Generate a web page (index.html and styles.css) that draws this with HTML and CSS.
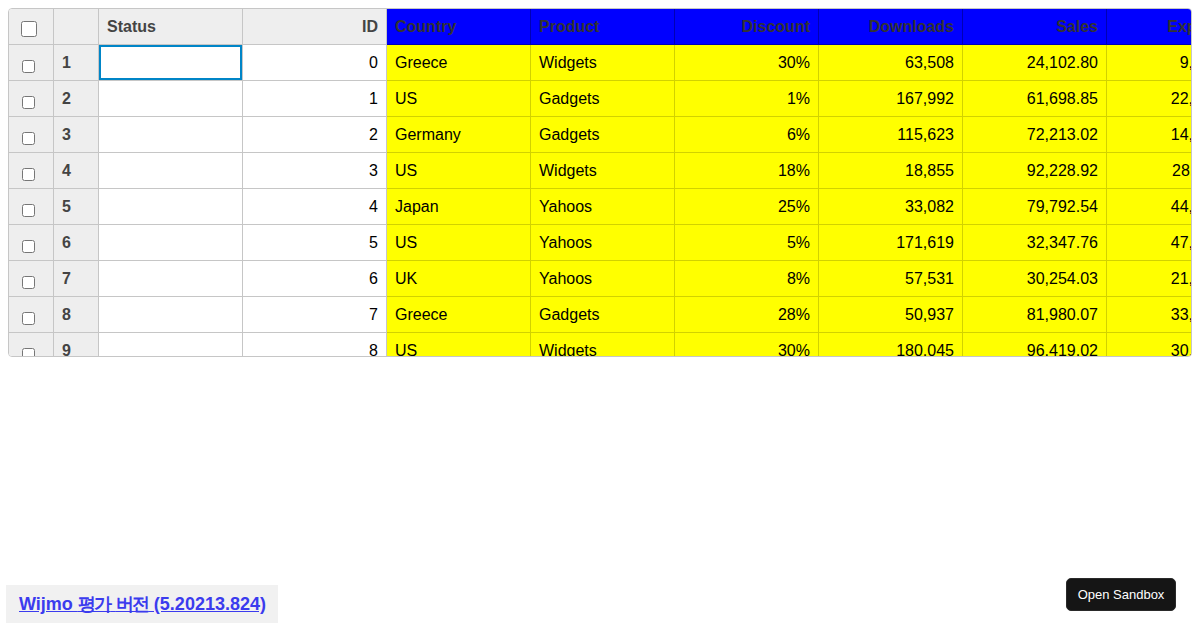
FILE: index.html
```html
<!DOCTYPE html>
<html lang="ko">
<head>
  <meta charset="UTF-8">
  <title>FlexGrid</title>
  <link rel="stylesheet" href="styles.css">
</head>
<body>
  <div class="grid">
    <div class="row hdr">
      <div class="cell fixed chk"><input type="checkbox" class="big"></div>
      <div class="cell fixed"></div>
      <div class="cell colhdr">Status</div>
      <div class="cell colhdr right">ID</div>
      <div class="cell blue">Country</div>
      <div class="cell blue">Product</div>
      <div class="cell blue right">Discount</div>
      <div class="cell blue right">Downloads</div>
      <div class="cell blue right">Sales</div>
      <div class="cell blue right">Expenses</div>
    </div>
  </div>

  <div class="banner"><a href="#">Wijmo <span class="ko">평가</span> <span class="ko">버전</span> (5.20213.824)</a></div>
  <button class="sandbox">Open Sandbox</button>

  <script>
    const data = [
      ['Greece', 'Widgets', '30%', '63,508', '24,102.80', '9,365.47'],
      ['US', 'Gadgets', '1%', '167,992', '61,698.85', '22,427.94'],
      ['Germany', 'Gadgets', '6%', '115,623', '72,213.02', '14,581.36'],
      ['US', 'Widgets', '18%', '18,855', '92,228.92', '28,113.60'],
      ['Japan', 'Yahoos', '25%', '33,082', '79,792.54', '44,018.25'],
      ['US', 'Yahoos', '5%', '171,619', '32,347.76', '47,262.81'],
      ['UK', 'Yahoos', '8%', '57,531', '30,254.03', '21,746.09'],
      ['Greece', 'Gadgets', '28%', '50,937', '81,980.07', '33,509.72'],
      ['US', 'Widgets', '30%', '180,045', '96,419.02', '30,871.44']
    ];
    const grid = document.querySelector('.grid');

    // build data rows
    data.forEach((d, i) => {
      const row = document.createElement('div');
      row.className = 'row';
      let html = '<div class="cell fixed chk"><input type="checkbox"></div>';
      html += '<div class="cell fixed num">' + (i + 1) + '</div>';
      html += '<div class="cell' + (i === 0 ? ' sel' : '') + '"></div>';
      html += '<div class="cell right">' + i + '</div>';
      html += '<div class="cell yel">' + d[0] + '</div>';
      html += '<div class="cell yel">' + d[1] + '</div>';
      for (let j = 2; j < d.length; j++) {
        html += '<div class="cell yel right">' + d[j] + '</div>';
      }
      row.innerHTML = html;
      grid.appendChild(row);
    });
  </script>
</body>
</html>
```

FILE: styles.css
```css
body { margin: 8px; font-family: "Liberation Sans", Arial, sans-serif; background: #fff; }

.grid {
  width: 1184px;
  height: 349px;
  box-sizing: border-box;
  border: 1px solid #c6c6c6;
  border-radius: 4px;
  overflow: hidden;
  font-size: 16px;
  color: #000;
}
.row {
  display: grid;
  grid-template-columns: 45px 45px repeat(8, 144px);
  height: 36px;
}
.cell {
  box-sizing: border-box;
  border-right: 1px solid #c6c6c6;
  border-bottom: 1px solid #c6c6c6;
  padding: 0 8px;
  line-height: 35px;
  white-space: nowrap;
  overflow: hidden;
  background: #fff;
}
.right { text-align: right; }
.fixed { background: #eee; color: #444; font-weight: bold; }
.colhdr { background: #eee; color: #444; font-weight: bold; }
.chk { display: flex; align-items: flex-start; padding: 0; }
.chk input { margin: 15px 0 0 13px; width: 13px; height: 13px; }
.chk input.big { margin: 12px 0 0 12px; width: 16px; height: 16px; }
.num { padding-left: 8px; }

.blue {
  background: #0000ff;
  color: #333;
  font-weight: bold;
  border-color: #0000b4;
}
.yel { background: #ffff00; border-color: #d2d200; }
.sel { box-shadow: inset 0 0 0 2px #0085c7; }

.banner {
  position: fixed;
  left: 6px;
  bottom: 7px;
  background: #f1f1f1;
  padding: 8px 12px 8px 13px;
  font-size: 18px;
  font-weight: bold;
  line-height: 22px;
}
.banner a { color: #3b3bee; text-decoration: underline; }
.banner .ko { letter-spacing: -1.5px; }

.sandbox {
  position: fixed;
  right: 24px;
  bottom: 19px;
  width: 110px;
  height: 33px;
  background: #151515;
  color: #fff;
  border: 1px solid #2a2a2a;
  border-radius: 5px;
  font-family: "Liberation Sans", Arial, sans-serif;
  font-size: 13px;
  cursor: pointer;
}
```
